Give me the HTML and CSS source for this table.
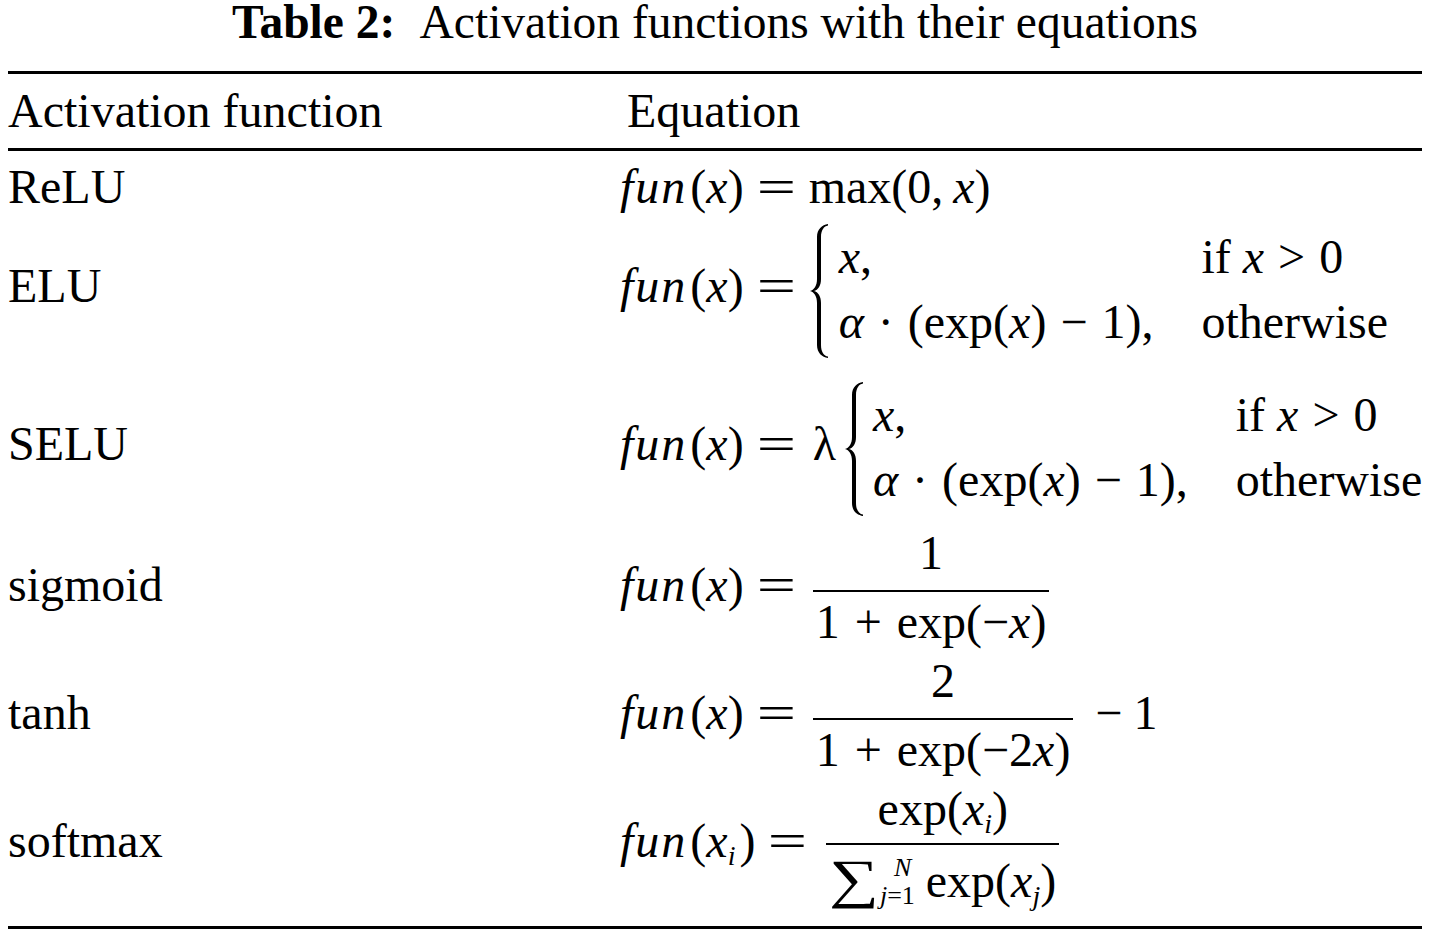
FILE: index.html
```html
<!DOCTYPE html>
<html lang="en">
<head>
<meta charset="utf-8">
<title>Table 2</title>
<link rel="stylesheet" href="styles.css">
</head>
<body>
<div class="page">
  <div class="caption"><b>Table 2:</b> Activation functions with their equations</div>
  <div class="table">
    <div class="row head">
      <div class="name">Activation function</div>
      <div class="eq">Equation</div>
    </div>
    <div class="row r-relu">
      <div class="name">ReLU</div>
      <div class="eq"><span class="mi fun">fun</span>(<span class="mi">x</span>)<span class="rel"><span class="eqs">=</span></span>max(0,<span class="th"></span><span class="mi">x</span>)</div>
    </div>
    <div class="row r-elu">
      <div class="name">ELU</div>
      <div class="eq"><span class="mi fun">fun</span>(<span class="mi">x</span>)<span class="rel"><span class="eqs">=</span></span><span class="cases"><svg class="brace" width="20" height="136" viewBox="0 0 20 136"><path d="M19 1C13 2 8 6 8 14L8 56C8 63 5 67 1 68C5 69 8 73 8 80L8 122C8 130 13 134 19 135L19 133.6C15 133 12 129 12 122L12 80C12 73 9 69 5 68C9 67 12 63 12 56L12 14C12 7 15 3 19 2.4Z"/></svg><span class="cgrid"><span><span class="mi">x</span>,</span><span>if <span class="mi">x</span><span class="rel">&gt;</span>0</span><span><span class="mi">α</span><span class="bin">·</span>(exp(<span class="mi">x</span>)<span class="bin">−</span>1),</span><span>otherwise</span></span></span></div>
    </div>
    <div class="row r-selu">
      <div class="name">SELU</div>
      <div class="eq"><span class="mi fun">fun</span>(<span class="mi">x</span>)<span class="rel"><span class="eqs">=</span></span><span class="lam">λ</span><span class="cases"><svg class="brace" width="20" height="136" viewBox="0 0 20 136"><path d="M19 1C13 2 8 6 8 14L8 56C8 63 5 67 1 68C5 69 8 73 8 80L8 122C8 130 13 134 19 135L19 133.6C15 133 12 129 12 122L12 80C12 73 9 69 5 68C9 67 12 63 12 56L12 14C12 7 15 3 19 2.4Z"/></svg><span class="cgrid"><span><span class="mi">x</span>,</span><span>if <span class="mi">x</span><span class="rel">&gt;</span>0</span><span><span class="mi">α</span><span class="bin">·</span>(exp(<span class="mi">x</span>)<span class="bin">−</span>1),</span><span>otherwise</span></span></span></div>
    </div>
    <div class="row r-sig">
      <div class="name">sigmoid</div>
      <div class="eq"><span class="mi fun">fun</span>(<span class="mi">x</span>)<span class="rel"><span class="eqs">=</span></span><span class="frac"><span class="num">1</span><span class="den">1<span class="bin">+</span>exp(−<span class="mi">x</span>)</span></span></div>
    </div>
    <div class="row r-tanh">
      <div class="name">tanh</div>
      <div class="eq"><span class="mi fun">fun</span>(<span class="mi">x</span>)<span class="rel"><span class="eqs">=</span></span><span class="frac"><span class="num">2</span><span class="den">1<span class="bin">+</span>exp(−2<span class="mi">x</span>)</span></span><span class="bin tail">−</span>1</div>
    </div>
    <div class="row r-soft">
      <div class="name">softmax</div>
      <div class="eq"><span class="mi fun">fun</span>(<span class="mi">x</span><sub class="mi si">i</sub>)<span class="rel"><span class="eqs">=</span></span><span class="frac sfrac"><span class="num">exp(<span class="mi">x</span><sub class="mi">i</sub>)</span><span class="den"><span class="sum">∑</span><span class="lims"><span class="mi sup">N</span><span class="low"><span class="mi">j</span>=1</span></span>exp(<span class="mi">x</span><sub class="mi">j</sub>)</span></span></div>
    </div>
  </div>
</div>
</body>
</html>
```

FILE: styles.css
```css
body {
  margin: 0;
  background: #fff;
  color: #000;
  font-family: "Liberation Serif", "Times New Roman", serif;
}

.page {
  padding: 0 7px 0 8px;
}

.caption {
  font-size: 47.5px;
  line-height: 45px;
  height: 45px;
  margin-bottom: 26px;
  text-align: center;
  white-space: nowrap;
}

.caption b {
  margin-right: 15px;
}

.table {
  border-top: 3px solid #000;
  border-bottom: 3px solid #000;
  font-size: 48px;
}

.row {
  display: flex;
  align-items: baseline;
  line-height: 48px;
  padding-top: 12px;
}

.head {
  padding: 13px 0;
  border-bottom: 3px solid #000;
}

.head .eq {
  padding-left: 7px;
}

.name {
  width: 612px;
  flex: none;
}

.eq {
  flex: 1;
  white-space: nowrap;
}

.mi {
  font-style: italic;
}

.fun {
  letter-spacing: 2px;
  margin-right: 3px;
}

.rel {
  display: inline-block;
  margin: 0 14px;
}

.eqs {
  display: inline-block;
  width: 37px;
  text-align: center;
  transform: scaleX(1.45);
}

.bin {
  margin: 0 11px;
}

.th {
  display: inline-block;
  width: 10px;
}

.cases {
  display: inline-flex;
  align-items: center;
  vertical-align: middle;
}

.brace {
  display: block;
  flex: none;
}

.cgrid {
  display: grid;
  grid-template-columns: auto auto;
  column-gap: 48px;
  line-height: 65px;
  margin-left: 10px;
  margin-top: -4px;
}

.cgrid .bin {
  margin: 0 14px;
}

.lam {
  margin-left: 4px;
  margin-right: 8px;
}

.r-selu .cgrid {
  margin-left: 9px;
}

.r-selu {
  padding-top: 22px;
}

.r-tanh,
.r-soft {
  padding-top: 11px;
}

.r-soft {
  padding-bottom: 15px;
}

.frac {
  display: inline-flex;
  flex-direction: column;
  align-items: stretch;
  text-align: center;
  vertical-align: 32px;
  margin-left: 4px;
}

.num {
  line-height: 48px;
  padding: 0 2px 13px;
}

.den {
  line-height: 48px;
  padding: 6px 3px 0;
  border-top: 2px solid #000;
}

.den .bin {
  margin: 0 15px;
}

.tail {
  margin-left: 22px;
}

.sfrac {
  margin-left: 6px;
}

.sfrac .num {
  padding-bottom: 10px;
}

.sfrac .den {
  padding-top: 10px;
}

sub {
  font-size: 28px;
  vertical-align: -8px;
  line-height: 0;
}

.si {
  padding-right: 4px;
}

.sum {
  display: inline-block;
  font-size: 54px;
  line-height: 0;
  transform: scaleX(1.3);
  margin: 0 6px 0 6px;
}

.lims {
  display: inline-flex;
  flex-direction: column;
  font-size: 26px;
  line-height: 26px;
  vertical-align: 21px;
  text-align: left;
  margin-right: 11px;
}

.sup {
  padding-left: 14px;
}

.low {
  line-height: 30px;
}
```
